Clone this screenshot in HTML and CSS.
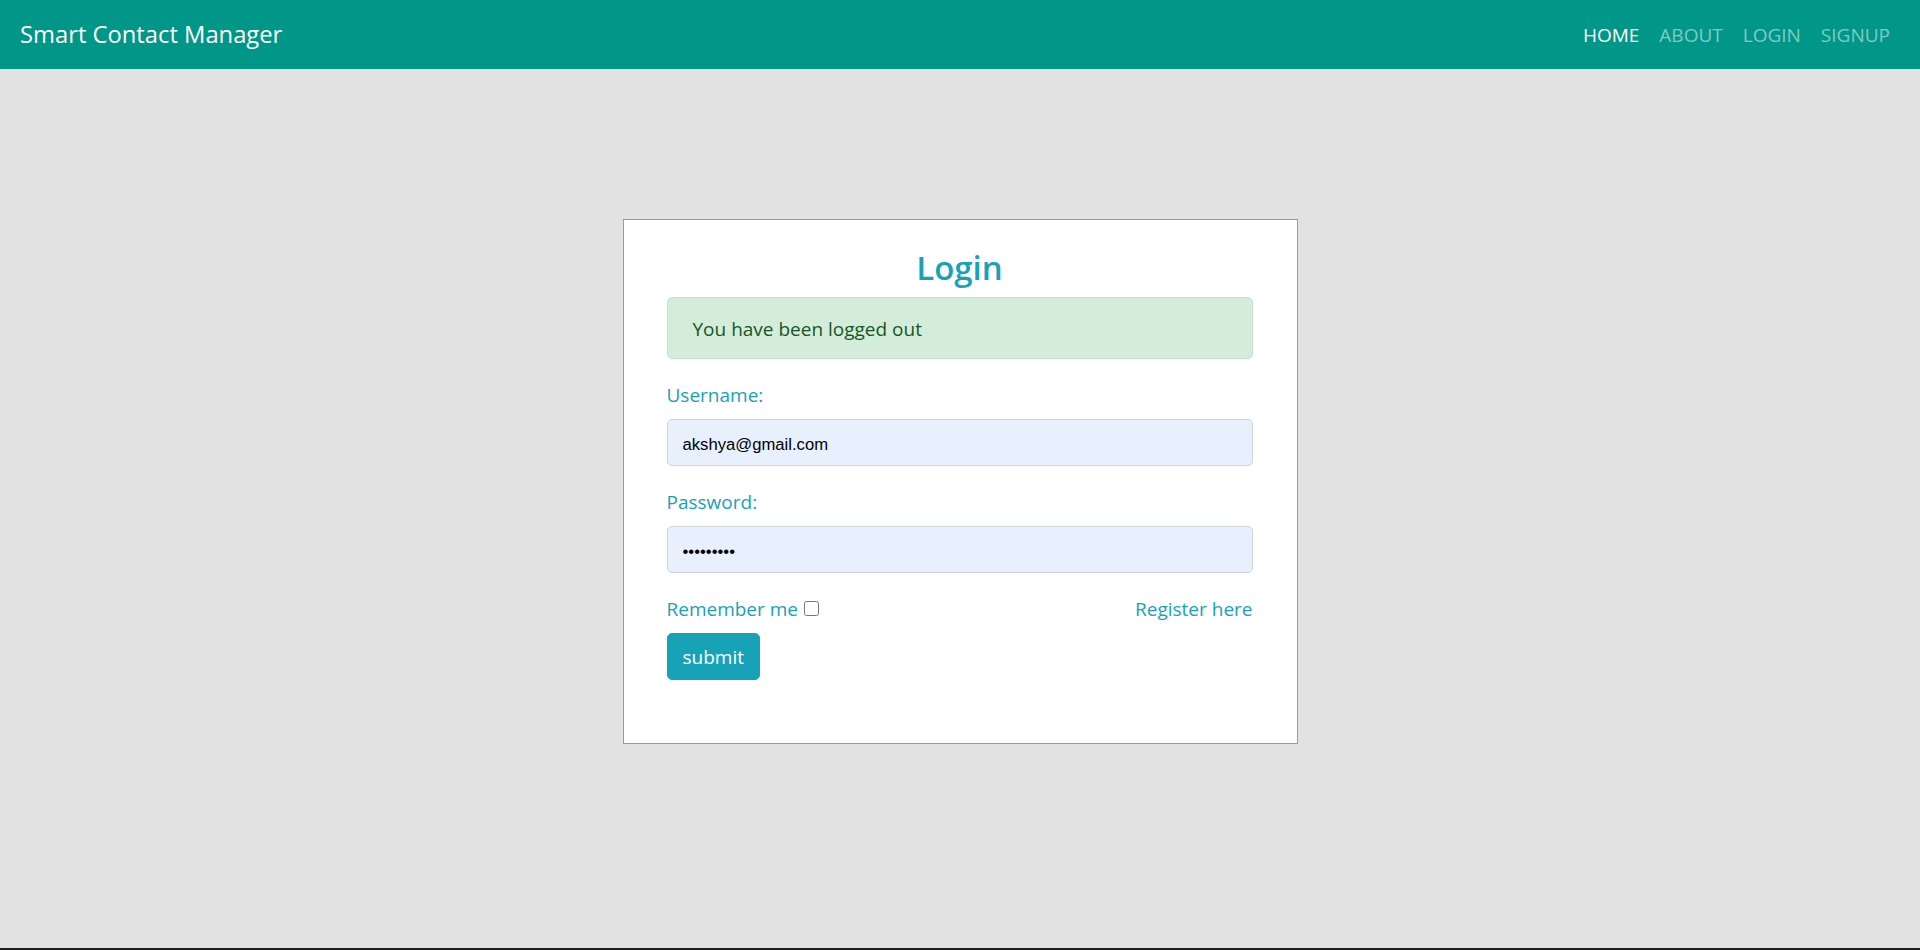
FILE: index.html
```html
<!DOCTYPE html>
<html lang="en">
<head>
<meta charset="utf-8">
<title>Smart Contact Manager - Login</title>
<link rel="stylesheet" href="styles.css">
</head>
<body>
<div class="page">
  <nav class="navbar">
    <a class="brand" href="#">Smart Contact Manager</a>
    <ul class="nav-links">
      <li><a class="nav-link active" href="#">HOME</a></li>
      <li><a class="nav-link" href="#">ABOUT</a></li>
      <li><a class="nav-link" href="#">LOGIN</a></li>
      <li><a class="nav-link" href="#">SIGNUP</a></li>
    </ul>
  </nav>
  <main class="main">
    <div class="card">
      <h3 class="title">Login</h3>
      <div class="alert">You have been logged out</div>
      <form class="form" onsubmit="return false;">
        <div class="form-group">
          <label class="label" for="username">Username:</label>
          <input class="form-control" id="username" type="text" value="akshya@gmail.com">
        </div>
        <div class="form-group">
          <label class="label" for="password">Password:</label>
          <input class="form-control" id="password" type="password" value="akshya123">
        </div>
        <div class="options-row">
          <label class="remember">Remember me <input class="checkbox" type="checkbox"></label>
          <a class="register" href="#">Register here</a>
        </div>
        <button class="btn-submit" type="submit">submit</button>
      </form>
    </div>
  </main>
  <div class="bottom-line"></div>
</div>
</body>
</html>
```
FILE: styles.css
```css
* {
  box-sizing: border-box;
}

html, body {
  margin: 0;
  padding: 0;
}

body {
  background: #e2e2e2;
  font-family: "Open Sans", "Noto Sans", sans-serif;
  color: #212529;
}

.page {
  display: flex;
  flex-direction: column;
  min-height: 100vh;
}

.navbar {
  height: 69px;
  background: #009688;
  display: flex;
  align-items: center;
  justify-content: space-between;
  padding: 0 20px;
}

.brand {
  color: #ffffff;
  text-decoration: none;
  font-size: 23.75px;
  line-height: 30px;
  margin-top: -1px;
}

.nav-links {
  list-style: none;
  margin: 0;
  padding: 0;
  display: flex;
}

.nav-link {
  display: block;
  padding: 0 10px;
  font-size: 19px;
  line-height: 30px;
  color: rgba(255, 255, 255, 0.5);
  text-decoration: none;
}

.nav-link.active {
  color: #ffffff;
}

.main {
  flex: 1;
  padding-top: 150px;
}

.card {
  width: 675px;
  margin: 0 auto;
  background: #ffffff;
  border: 1px solid #9a9a9a;
  padding: 27px 44px 63px 43px;
}

.title {
  margin: 0 0 8px;
  text-align: center;
  color: #17a2b8;
  font-size: 33px;
  line-height: 42px;
  font-weight: 600;
}

.alert {
  background: #d4edda;
  border: 1px solid #c3e6cb;
  border-radius: 5px;
  color: #155724;
  padding: 16px 25px 14px;
  font-size: 19px;
  line-height: 30px;
  margin-bottom: 20px;
}

.form-group {
  margin-bottom: 20px;
}

.label {
  display: block;
  color: #17a2b8;
  font-size: 19px;
  line-height: 30px;
  padding-top: 1px;
  margin-bottom: 9px;
}

.form-control {
  display: block;
  width: 100%;
  height: 47px;
  padding: 4px 15px 0;
  background: #e8f0fe;
  border: 1px solid #ced4da;
  border-radius: 5px;
  font-family: "Liberation Sans", Arial, sans-serif;
  font-size: 16.67px;
  color: #000000;
  outline: none;
}

.options-row {
  display: flex;
  justify-content: space-between;
  align-items: baseline;
  font-size: 19px;
  line-height: 30px;
  padding-top: 1px;
  margin-bottom: 9px;
}

.remember {
  color: #17a2b8;
}

.checkbox {
  width: 15px;
  height: 15px;
  margin: 0 0 0 1px;
  vertical-align: baseline;
}

.register {
  color: #17a2b8;
  text-decoration: none;
}

.btn-submit {
  display: inline-block;
  height: 47px;
  padding: 0 15px;
  background: #17a2b8;
  border: 1px solid #17a2b8;
  border-radius: 5px;
  color: #ffffff;
  font-family: "Open Sans", "Noto Sans", sans-serif;
  font-size: 19px;
  line-height: 30px;
  cursor: pointer;
}

.bottom-line {
  height: 2px;
  background: #1e1e1e;
}
```
